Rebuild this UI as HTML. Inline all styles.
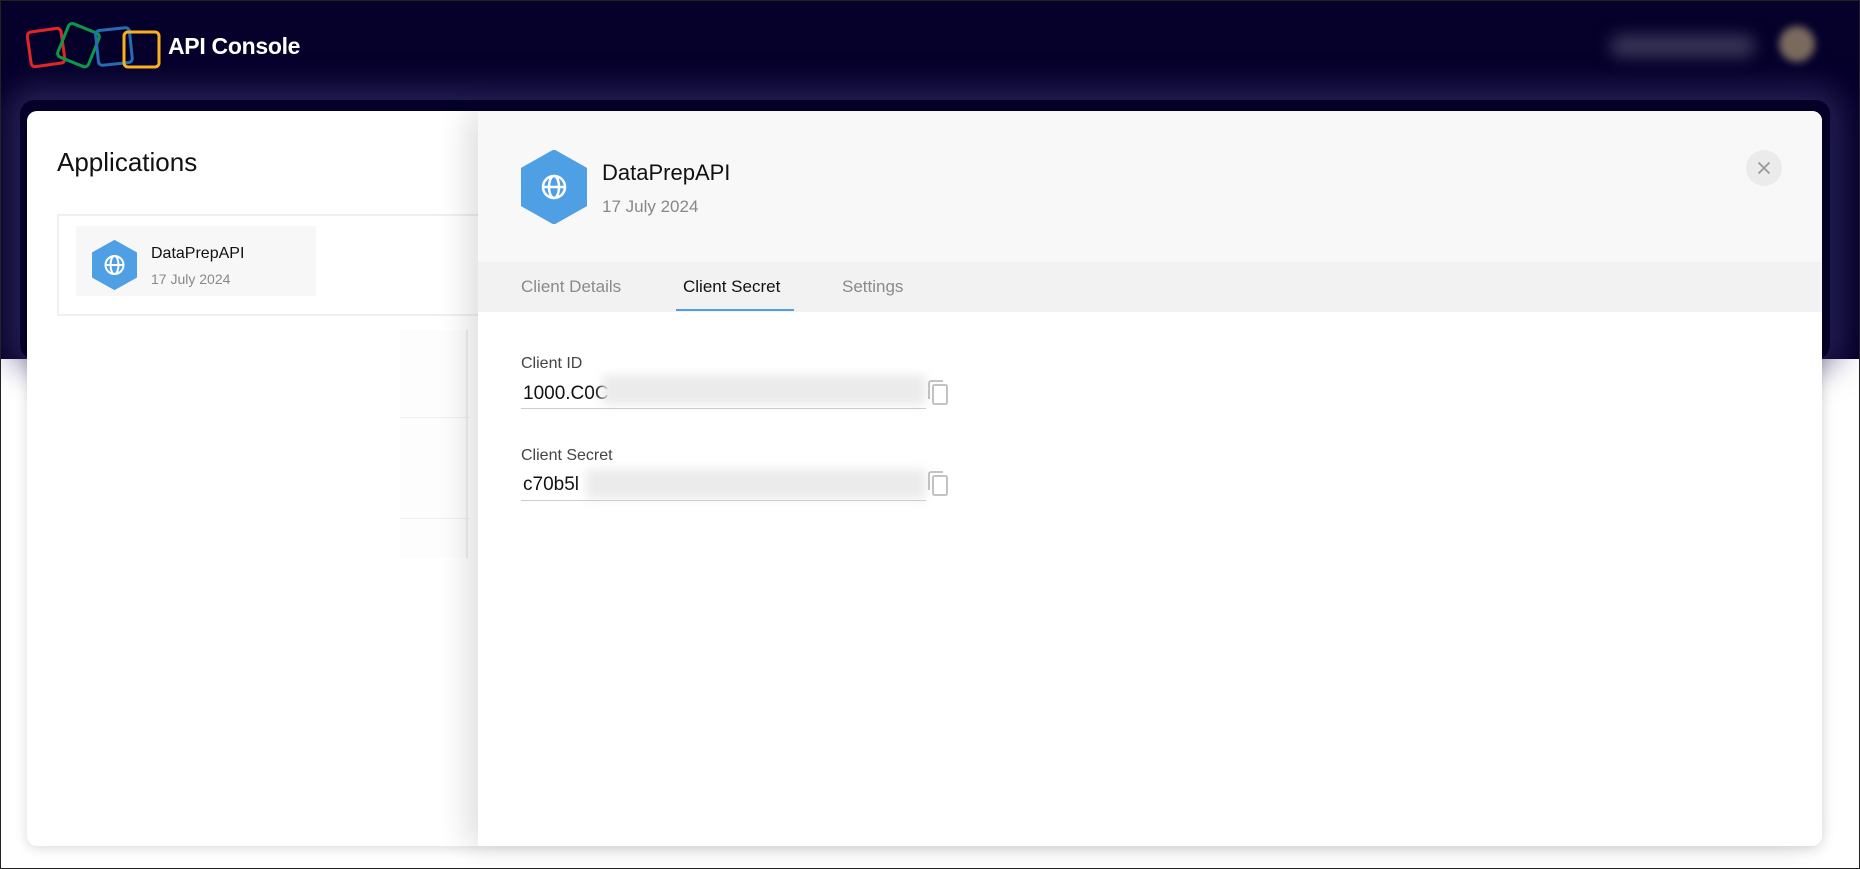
<!DOCTYPE html>
<html><head><meta charset="utf-8"><style>
*{box-sizing:border-box;margin:0;padding:0}
html,body{width:1860px;height:869px;overflow:hidden;background:#fff;font-family:"Liberation Sans",sans-serif}
.frame{position:absolute;inset:0;border:1px solid #222;}
.top{position:absolute;left:0;top:0;width:1860px;height:359px;background:#05012b}
.glow{position:absolute;left:20px;top:100px;width:1810px;height:259px;border-radius:14px;box-shadow:0 0 30px 12px rgba(70,60,120,.55)}
.brand{position:absolute;left:168px;top:33px;color:#fff;font-weight:bold;font-size:23px;letter-spacing:-0.3px}
.card{position:absolute;left:27px;top:111px;width:1795px;height:735px;background:#fff;border-radius:10px;box-shadow:0 2px 12px rgba(0,0,0,.15)}
.apps{position:absolute;left:57px;top:147px;font-size:26px;color:#111}
.list{position:absolute;left:57px;top:214px;width:421px;height:102px;border:2px solid #efefef;border-right:none}
.item{position:absolute;left:76px;top:226px;width:240px;height:70px;background:#f7f7f7}
.behind{position:absolute;left:400px;top:330px;width:68px;height:228px;background:#fdfdfd;border-right:2px solid #eee}
.panel{position:absolute;left:478px;top:111px;width:1344px;height:735px;background:#fff;border-radius:0 10px 10px 0;box-shadow:-12px 0 30px rgba(0,0,0,.12);overflow:hidden}
.phead{position:absolute;left:0;top:0;width:100%;height:151px;background:#f8f8f8}
.tabs{position:absolute;left:0;top:151px;width:100%;height:50px;background:#f2f2f2}
.tab{position:absolute;top:166px;font-size:17px;color:#8a8a8a}
.lbl{position:absolute;font-size:16px;color:#444}
.val{position:absolute;font-size:19px;color:#111}
.line{position:absolute;height:1px;background:#ccc;width:405px}
.blur{position:absolute;background:#ebebeb;filter:blur(5px)}
</style></head><body>
<div class="top"></div>
<div class="glow"></div>
<svg style="position:absolute;left:26px;top:22px" width="136" height="50" viewBox="0 0 136 50">
<rect x="3" y="8" width="34" height="35" rx="4" fill="none" stroke="#e42527" stroke-width="3" transform="rotate(-8 20 25)"/>
<rect x="36" y="5" width="33" height="36" rx="4" fill="none" stroke="#089949" stroke-width="3" transform="rotate(22 52 23)"/>
<rect x="71" y="7" width="34" height="35" rx="4" fill="none" stroke="#226db4" stroke-width="3" transform="rotate(-6 88 25)"/>
<rect x="98" y="10" width="35" height="35" rx="4" fill="none" stroke="#f9b21d" stroke-width="3"/>
</svg>
<div class="brand">API Console</div>
<div style="position:absolute;left:1610px;top:35px;width:145px;height:22px;border-radius:11px;background:#3a3558;filter:blur(8px)"></div>
<div style="position:absolute;left:1779px;top:26px;width:36px;height:36px;border-radius:50%;background:#7a6a5e;filter:blur(4px)"></div>
<div class="card"></div>
<div class="apps">Applications</div>
<div class="list"></div>
<div class="item"></div>
<svg style="position:absolute;left:92px;top:240px" width="45" height="50" viewBox="0 0 45 50"><path d="M22.5 1 L44 13 V37 L22.5 49 L1 37 V13Z" fill="#4f9fe4" stroke="#4f9fe4" stroke-linejoin="round" stroke-width="2"/><g fill="none" stroke="#fff" stroke-width="2"><circle cx="22.5" cy="25" r="9"/><ellipse cx="22.5" cy="25" rx="4" ry="9"/><line x1="13.5" y1="25" x2="31.5" y2="25"/></g></svg>
<div style="position:absolute;left:151px;top:245px;font-size:16px;color:#111">DataPrepAPI</div>
<div style="position:absolute;left:151px;top:271px;font-size:14px;color:#888">17 July 2024</div>
<div class="behind"></div>
<div style="position:absolute;left:400px;top:417px;width:70px;height:1px;background:#eee"></div>
<div style="position:absolute;left:400px;top:518px;width:70px;height:1px;background:#eee"></div>
<div class="panel">
<div class="phead"></div>
<div class="tabs"></div>
<svg style="position:absolute;left:43px;top:39px" width="66" height="74" viewBox="0 0 66 74"><path d="M33 1 L65 19 V55 L33 73 L1 55 V19Z" fill="#4f9fe4" stroke="#4f9fe4" stroke-linejoin="round" stroke-width="3"/><g fill="none" stroke="#fff" stroke-width="2.5"><circle cx="33" cy="37" r="11"/><ellipse cx="33" cy="37" rx="5" ry="11"/><line x1="22" y1="37" x2="44" y2="37"/></g></svg>
<div style="position:absolute;left:124px;top:49px;font-size:22px;color:#111">DataPrepAPI</div>
<div style="position:absolute;left:124px;top:86px;font-size:17px;color:#888">17 July 2024</div>
<svg style="position:absolute;left:1268px;top:39px" width="36" height="36" viewBox="0 0 36 36"><circle cx="18" cy="18" r="18" fill="#ebebeb"/><path d="M12.5 12.5L23.5 23.5M23.5 12.5L12.5 23.5" stroke="#999" stroke-width="1.8"/></svg>
<div class="tab" style="left:43px">Client Details</div>
<div class="tab" style="left:205px;color:#111">Client Secret</div>
<div class="tab" style="left:364px">Settings</div>
<div style="position:absolute;left:198px;top:198px;width:118px;height:2px;background:#4f9fe4"></div>
<div class="lbl" style="left:43px;top:244px">Client ID</div>
<div class="val" style="left:45px;top:272px">1000.C0C</div>
<div class="blur" style="left:124px;top:264px;width:324px;height:30px"></div>
<div class="line" style="left:43px;top:297px"></div>
<div class="lbl" style="left:43px;top:336px">Client Secret</div>
<div class="val" style="left:45px;top:363px">c70b5l</div>
<div class="blur" style="left:108px;top:358px;width:340px;height:30px"></div>
<div class="line" style="left:43px;top:389px"></div>
<svg style="position:absolute;left:449px;top:269px" width="22" height="26" viewBox="0 0 22 26"><path d="M2 19V3a2 2 0 0 1 2-2h12" fill="none" stroke="#bbb" stroke-width="1.8"/><rect x="6" y="5" width="14" height="19" rx="1.5" fill="none" stroke="#bbb" stroke-width="1.8"/></svg>
<svg style="position:absolute;left:449px;top:360px" width="22" height="26" viewBox="0 0 22 26"><path d="M2 19V3a2 2 0 0 1 2-2h12" fill="none" stroke="#bbb" stroke-width="1.8"/><rect x="6" y="5" width="14" height="19" rx="1.5" fill="none" stroke="#bbb" stroke-width="1.8"/></svg>
</div>
<div class="frame"></div>
</body></html>
